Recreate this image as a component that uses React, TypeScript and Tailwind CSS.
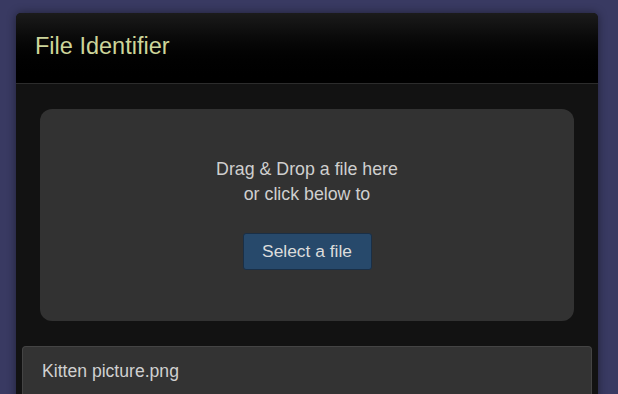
import React from 'react'

const App = () => {
  return (
    <div className="min-h-[394px] w-full overflow-hidden bg-[#393a62] pl-4 pr-[20px] pt-[13px] font-['Liberation_Sans',Arial,sans-serif]">
      <div className="rounded-t-[5px] bg-[#121212] shadow-[0_0_10px_rgba(0,0,0,0.45)]">
        <div className="flex h-[71px] items-center rounded-t-[5px] border-b border-[#2c2c2c] bg-gradient-to-b from-[#1b1b1b] to-[#000000] px-[19px] pb-[2px]">
          <h1 className="text-[23.5px] text-[#cdd59a]">File Identifier</h1>
        </div>
        <div className="px-[24px] pt-[25px]">
          <div className="flex h-[212px] flex-col items-center rounded-[12px] bg-[#323232] pt-[48px]">
            <p className="text-center text-[17.8px] leading-[25px] text-[#cfcfcf]">
              Drag &amp; Drop a file here
              <br />
              or click below to
            </p>
            <button className="mt-[26px] h-[37px] w-[129px] rounded-[3px] border border-[#1a2f46] bg-[#27496b] text-[17.4px] text-[#dcdcdc]">
              Select a file
            </button>
          </div>
        </div>
        <div className="px-[6px] pt-[25px]">
          <div className="h-[60px] rounded-t-[4px] border border-b-0 border-[#444444] bg-[#333333] px-[19px] pt-[11px] text-[17.6px] text-[#d0d0d0]">
            Kitten picture.png
          </div>
        </div>
      </div>
    </div>
  )
}

export default App
